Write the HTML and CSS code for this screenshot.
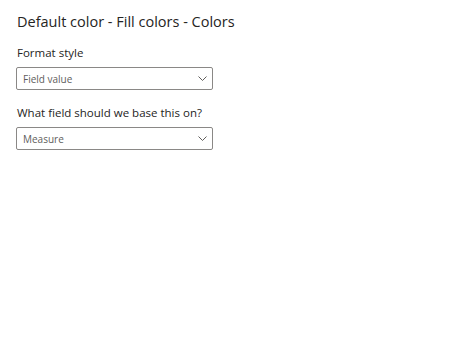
FILE: index.html
```html
<!DOCTYPE html>
<html lang="en">
<head>
    <meta charset="UTF-8">
    <title>Default color - Fill colors - Colors</title>
    <link rel="stylesheet" href="styles.css">
</head>
<body>
    <div class="panel">
        <h1 class="title">Default color - Fill colors - Colors</h1>
        <div class="field">
            <label class="label">Format style</label>
            <div class="dropdown">
                <span>Field value</span>
                <svg class="chevron" width="9" height="5" viewBox="0 0 9 5"><path d="M0.5 0.5 L4.5 4.5 L8.5 0.5" fill="none" stroke="#605e5c" stroke-width="1"/></svg>
            </div>
        </div>
        <div class="field">
            <label class="label">What field should we base this on?</label>
            <div class="dropdown">
                <span>Measure</span>
                <svg class="chevron" width="9" height="5" viewBox="0 0 9 5"><path d="M0.5 0.5 L4.5 4.5 L8.5 0.5" fill="none" stroke="#605e5c" stroke-width="1"/></svg>
            </div>
        </div>
    </div>
</body>
</html>
```

FILE: styles.css
```css
body {
    margin: 0;
    background: #fff;
    font-family: "Open Sans", "Noto Sans", sans-serif;
    color: #252423;
}
.panel {
    padding: 12px 16px;
    width: 197px;
}
.title {
    font-size: 14.5px;
    font-weight: 400;
    margin: 0 0 13px 1px;
    white-space: nowrap;
    line-height: 20px;
}
.field {
    margin-bottom: 15px;
}
.label {
    display: block;
    font-size: 11.5px;
    line-height: 16px;
    margin: 0 0 6px 1px;
    white-space: nowrap;
}
.dropdown {
    height: 21px;
    border: 1px solid #8a8886;
    border-radius: 2px;
    display: flex;
    align-items: center;
    justify-content: space-between;
    padding: 0 5px 0 6px;
    font-size: 10px;
    color: #605e5c;
}
```
